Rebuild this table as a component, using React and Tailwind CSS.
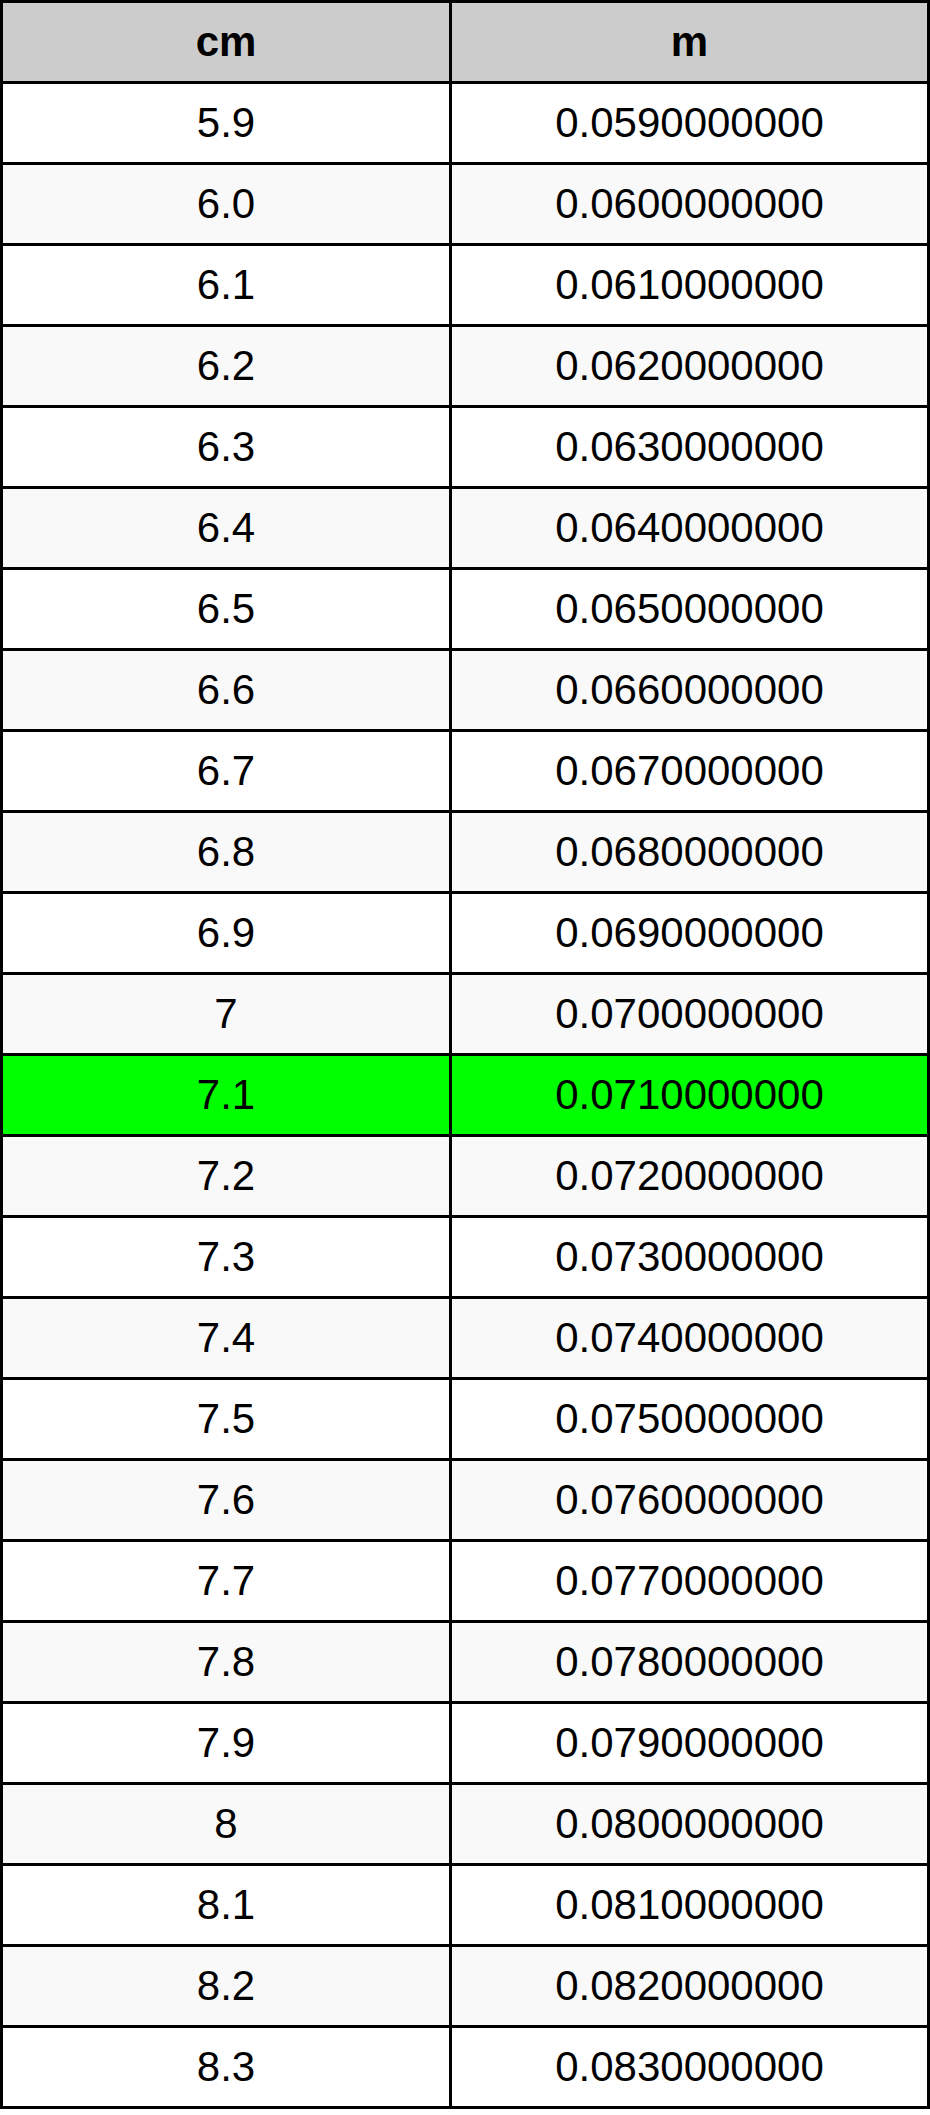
import React from 'react';

const values = [
  '5.9', '6.0', '6.1', '6.2', '6.3', '6.4', '6.5', '6.6', '6.7', '6.8', '6.9', '7',
  '7.1', '7.2', '7.3', '7.4', '7.5', '7.6', '7.7', '7.8', '7.9', '8', '8.1', '8.2', '8.3',
];

const toMeters = (cm) => (parseFloat(cm) / 100).toFixed(10);

const App = () => {
  return (
    <div className="w-[930px] bg-white font-['Liberation_Sans',Arial,sans-serif] text-black">
      <div className="border-[3px] border-black">
        <div className="grid grid-cols-[449px_1fr] h-[81px] border-b-[3px] border-black bg-[#cccccc] text-[42px] font-bold leading-none">
          <div className="flex items-center justify-center border-r-[3px] border-black">cm</div>
          <div className="flex items-center justify-center">m</div>
        </div>
        {values.map((cm, i) => {
          const highlight = cm === '7.1';
          const last = i === values.length - 1;
          const bg = highlight ? 'bg-[#00ff00]' : i % 2 === 1 ? 'bg-[#f9f9f9]' : 'bg-white';
          return (
            <div
              key={cm}
              className={`grid grid-cols-[449px_1fr] text-[42px] leading-none ${bg} ${last ? 'h-[78px]' : 'h-[81px] border-b-[3px] border-black'}`}
            >
              <div className="flex items-center justify-center border-r-[3px] border-black">{cm}</div>
              <div className="flex items-center justify-center">{toMeters(cm)}</div>
            </div>
          );
        })}
      </div>
    </div>
  );
};

export default App;
